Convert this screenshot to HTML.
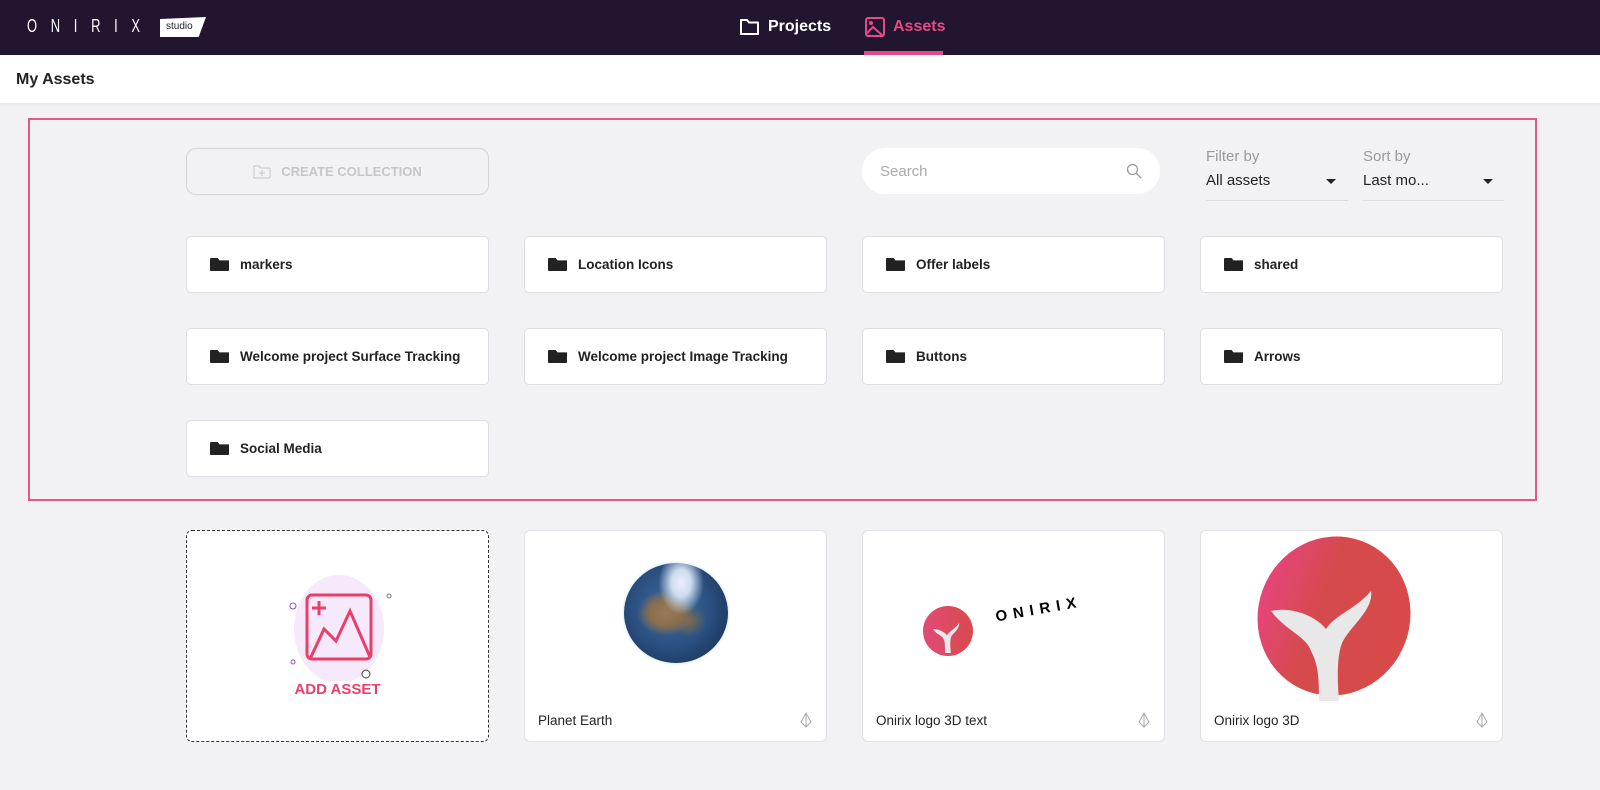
<!DOCTYPE html>
<html><head><meta charset="utf-8"><style>
*{box-sizing:border-box;margin:0;padding:0}
body{width:1600px;height:790px;background:#f2f2f4;font-family:"Liberation Sans",sans-serif;position:relative;overflow:hidden}
.hdr{position:absolute;left:0;top:0;width:1600px;height:55px;background:#22152f}
.logo{position:absolute;left:27px;top:16px;color:#fff;font-size:18px;letter-spacing:19px;font-weight:300;transform:scaleX(.72);transform-origin:left;white-space:nowrap}
.studio{position:absolute;left:160px;top:17px;width:46px;height:20px;background:#fff;clip-path:polygon(0 2px,100% 0,84% 100%,0 100%);font-size:10px;color:#222;padding:4px 0 0 6px}
.nav{position:absolute;top:17px;font-size:16px;font-weight:bold;color:#fff;display:flex;align-items:center;gap:8px}
.sub{position:absolute;top:55px;left:0;width:1600px;height:48px;background:#fff;box-shadow:0 1px 3px rgba(0,0,0,.06)}
.sub span{position:absolute;left:16px;top:16px;font-size:16px;color:#222;font-weight:bold}
.box{position:absolute;left:28px;top:118px;width:1509px;height:383px;border:2px solid #e0588a}
.abs{position:absolute}
.folder{position:absolute;width:303px;height:57px;background:#fff;border:1px solid #dedee2;border-radius:5px;font-size:13.5px;font-weight:bold;color:#222;display:flex;align-items:center;padding-left:23px;gap:11px}
.folder i{display:inline-block;width:19px;height:13px;background:#222;clip-path:polygon(0 0,40% 0,50% 18%,100% 18%,100% 100%,0 100%);border-radius:1px}
.card{position:absolute;top:530px;width:303px;height:212px;background:#fff;border:1px solid #e0e0e4;border-radius:6px;overflow:hidden}
.card .t{position:absolute;left:13px;bottom:13px;font-size:13.5px;color:#222}
.card svg.u{position:absolute;right:13px;bottom:13px}
</style></head><body>
<div class="hdr">
 <div class="logo">ONIRIX</div>
 <div class="studio">studio</div>
 <div class="nav" style="left:739px"><svg width="21" height="19" viewBox="0 0 21 19"><path d="M2 3h6l2 2.5h9v11.5H2z" fill="none" stroke="#fff" stroke-width="2" stroke-linejoin="round"/></svg>Projects</div>
 <div class="nav" style="left:865px;color:#e64a86"><svg width="20" height="20" viewBox="0 0 20 20"><rect x="1" y="1" width="18" height="18" rx="2" fill="none" stroke="#e64a86" stroke-width="2"/><circle cx="6" cy="6" r="2" fill="#e64a86"/><path d="M1 17l7-7 10 9" fill="none" stroke="#e64a86" stroke-width="2"/></svg>Assets</div>
 <div class="abs" style="left:864px;top:51px;width:79px;height:4px;background:#e64a86"></div>
</div>
<div class="sub"><span>My Assets</span></div>
<div class="box"></div>
<div class="abs" style="left:186px;top:148px;width:303px;height:47px;border:1px solid #d4d4d8;border-radius:10px;display:flex;align-items:center;justify-content:center;gap:10px;color:#c6c6ca;font-size:13px;font-weight:bold"><svg width="18" height="14" viewBox="0 0 18 14"><path d="M1 1h5l1.5 2H17v10H1z" fill="none" stroke="#c6c6ca"/><path d="M9 5v6M6 8h6" stroke="#c6c6ca"/></svg>CREATE COLLECTION</div>
<div class="abs" style="left:862px;top:148px;width:298px;height:46px;background:#fff;border-radius:23px;color:#aaa;font-size:15px;padding:15px 0 0 18px">Search<svg style="position:absolute;right:18px;top:15px" width="16" height="16" viewBox="0 0 16 16"><circle cx="6.5" cy="6.5" r="5" fill="none" stroke="#999" stroke-width="1.3"/><path d="M10 10l5 5" stroke="#999" stroke-width="1.3"/></svg></div>
<div class="abs" style="left:1206px;top:148px;color:#999;font-size:15px">Filter by</div>
<div class="abs" style="left:1206px;top:172px;color:#222;font-size:15px">All assets</div>
<div class="abs" style="left:1326px;top:179px;border:5px solid transparent;border-top:5px solid #222;border-bottom:0"></div>
<div class="abs" style="left:1206px;top:200px;width:142px;height:1px;background:#ddd"></div>
<div class="abs" style="left:1363px;top:148px;color:#999;font-size:15px">Sort by</div>
<div class="abs" style="left:1363px;top:172px;color:#222;font-size:15px">Last mo...</div>
<div class="abs" style="left:1483px;top:179px;border:5px solid transparent;border-top:5px solid #222;border-bottom:0"></div>
<div class="abs" style="left:1363px;top:200px;width:141px;height:1px;background:#ddd"></div>

<div class="folder" style="left:186px;top:236px"><i></i>markers</div>
<div class="folder" style="left:524px;top:236px"><i></i>Location Icons</div>
<div class="folder" style="left:862px;top:236px"><i></i>Offer labels</div>
<div class="folder" style="left:1200px;top:236px"><i></i>shared</div>
<div class="folder" style="left:186px;top:328px"><i></i>Welcome project Surface Tracking</div>
<div class="folder" style="left:524px;top:328px"><i></i>Welcome project Image Tracking</div>
<div class="folder" style="left:862px;top:328px"><i></i>Buttons</div>
<div class="folder" style="left:1200px;top:328px"><i></i>Arrows</div>
<div class="folder" style="left:186px;top:420px"><i></i>Social Media</div>

<div class="card" style="left:186px;border:1px dashed #333;">
 <svg class="abs" style="left:90px;top:40px" width="125" height="110" viewBox="0 0 125 110"><ellipse cx="62" cy="58" rx="45" ry="54" fill="#f6e9fb"/><circle cx="16" cy="35" r="3" fill="none" stroke="#9b4ea8"/><circle cx="112" cy="25" r="2" fill="none" stroke="#777"/><circle cx="16" cy="91" r="2" fill="none" stroke="#9b4ea8"/><circle cx="89" cy="103" r="4" fill="none" stroke="#443"/><rect x="30" y="24" width="64" height="64" rx="5" fill="none" stroke="#ea3f6a" stroke-width="3"/><path d="M42 30v14M35 37h14" stroke="#ea3f6a" stroke-width="3"/><path d="M33 88l14-30 12 12 14-30 20 46" fill="none" stroke="#ea3f6a" stroke-width="3"/></svg>
 <div class="abs" style="left:0;width:301px;top:150px;text-align:center;color:#ea3f6a;font-weight:bold;font-size:15px">ADD ASSET</div>
</div>
<div class="card" style="left:524px"><div class="abs" style="left:99px;top:32px;width:104px;height:100px;border-radius:50%;overflow:hidden;background:radial-gradient(ellipse at 55% 20%,#eef 0,#cde 12%,transparent 28%),radial-gradient(ellipse at 40% 50%,#9a7a55 0,#8a6e4e 18%,transparent 32%),radial-gradient(ellipse at 62% 58%,#7a6a4a 0,transparent 20%),radial-gradient(circle at 45% 45%,#3f6ea0 0,#2a4f80 50%,#142848 100%);box-shadow:0 0 3px #bde"></div><div class="t">Planet Earth</div><svg class="u" width="14" height="16" viewBox="0 0 14 16"><path d="M7 1L2 10l5 5 5-5z M7 1v14" fill="none" stroke="#aaa"/></svg></div>
<div class="card" style="left:862px"><div class="abs" style="left:60px;top:75px;width:50px;height:50px;border-radius:50%;background:linear-gradient(90deg,#e24a78,#d84a4a)"></div><svg class="abs" style="left:68px;top:90px" width="36" height="36" viewBox="0 0 36 36"><path d="M2 8c6 0 11 3 14 6 3-4 8-6 12-12 1 6-6 10-8 14-1 4-1 10 0 16h-6c0-8 0-12-2-15C10 14 5 13 2 8z" fill="#e8e8e8"/></svg><div class="abs" style="left:132px;top:70px;font-weight:bold;font-size:15px;letter-spacing:6px;transform:rotate(-10deg)">ONIRIX</div><div class="t">Onirix logo 3D text</div><svg class="u" width="14" height="16" viewBox="0 0 14 16"><path d="M7 1L2 10l5 5 5-5z M7 1v14" fill="none" stroke="#aaa"/></svg></div>
<div class="card" style="left:1200px"><div class="abs" style="left:57px;top:5px;width:152px;height:160px;border-radius:50%;background:linear-gradient(90deg,#e6457a,#d54a4c 40%,#d84a4a);transform:rotate(20deg)"></div><svg class="abs" style="left:65px;top:55px" width="130" height="115" viewBox="0 0 130 115"><path d="M5 25c20-5 45 5 55 18 10-15 30-20 45-38 3 18-20 35-28 50-6 12-6 35-4 60l-20 5c0-25 0-40-8-55C40 50 20 45 5 25z" fill="#e8e8e8"/></svg><div class="t">Onirix logo 3D</div><svg class="u" width="14" height="16" viewBox="0 0 14 16"><path d="M7 1L2 10l5 5 5-5z M7 1v14" fill="none" stroke="#aaa"/></svg></div>
</body></html>
